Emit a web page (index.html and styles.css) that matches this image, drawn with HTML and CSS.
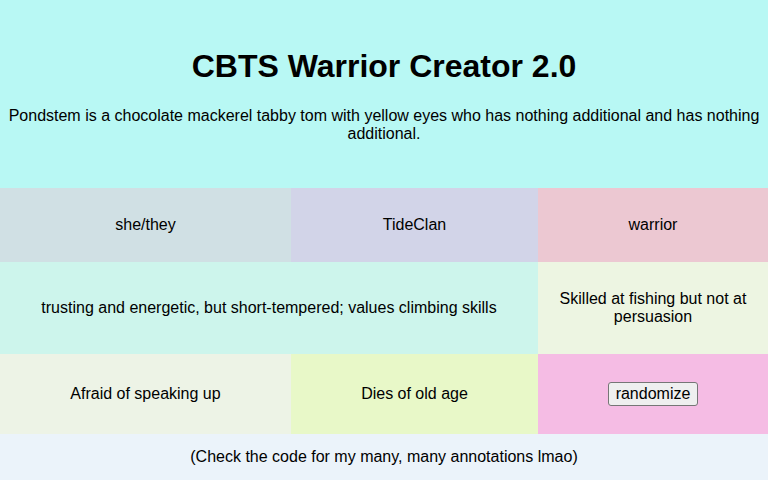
FILE: index.html
```html
<!DOCTYPE html>
<html lang="en">
<head>
<meta charset="utf-8">
<title>CBTS Warrior Creator 2.0</title>
<link rel="stylesheet" href="styles.css">
</head>
<body>
<header class="hero">
  <h1 class="title">CBTS Warrior Creator 2.0</h1>
  <p class="desc">Pondstem is a chocolate mackerel tabby tom with yellow eyes who has nothing additional and has nothing additional.</p>
</header>
<main class="grid">
  <div class="cell c-pronoun">she/they</div>
  <div class="cell c-clan">TideClan</div>
  <div class="cell c-rank">warrior</div>
  <div class="cell c-personality">trusting and energetic, but short-tempered; values climbing skills</div>
  <div class="cell c-skill">Skilled at fishing but not at persuasion</div>
  <div class="cell c-fear">Afraid of speaking up</div>
  <div class="cell c-death">Dies of old age</div>
  <div class="cell c-action"><button class="btn" type="button">randomize</button></div>
</main>
<footer class="foot">(Check the code for my many, many annotations lmao)</footer>
</body>
</html>
```

FILE: styles.css
```css
* { box-sizing: border-box; }
html, body {
  margin: 0;
  padding: 0;
}
body {
  font-family: "Liberation Sans", Arial, sans-serif;
  font-size: 16px;
  color: #000;
  width: 768px;
  height: 480px;
  overflow: hidden;
  background: #ebf3fa;
}
.hero {
  background: #b8f8f4;
  text-align: center;
  padding: 27px 8px 28px;
  height: 188px;
}
.title {
  font-size: 32px;
  font-weight: bold;
  margin: 21px 0 22px;
  line-height: 37px;
}
.desc {
  margin: 0;
  line-height: 18px;
}
.grid {
  display: grid;
  grid-template-columns: 291px 247px 230px;
}
.cell {
  display: flex;
  align-items: center;
  justify-content: center;
  text-align: center;
  padding: 28px 12px;
  line-height: 18px;
}
.c-pronoun { background: #d0e0e4; }
.c-clan { background: #d2d4e8; }
.c-rank { background: #ecc8d2; }
.c-personality { background: #cdf5ec; grid-column: span 2; }
.c-skill { background: #edf5e2; }
.c-fear { background: #edf3e6; }
.c-death { background: #e8f8c8; }
.c-action { background: #f5bce4; }
.btn {
  font-family: "Liberation Sans", Arial, sans-serif;
  font-size: 16px;
  line-height: 18px;
  height: 24px;
  padding: 2px 7px;
  background: #efefef;
  border: 1px solid #767676;
  border-radius: 3px;
  color: #000;
}
.foot {
  background: #ebf3fa;
  text-align: center;
  line-height: 18px;
  padding: 14px 8px 14px;
}
```
